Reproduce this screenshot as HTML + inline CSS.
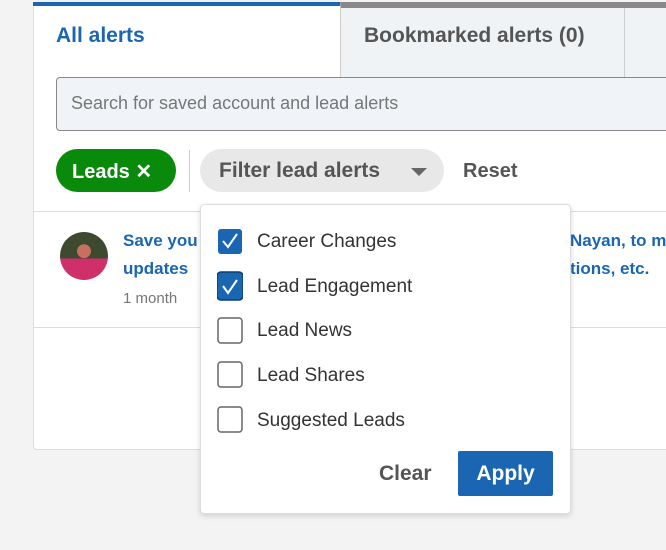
<!DOCTYPE html>
<html><head><style>
*{box-sizing:border-box;margin:0;padding:0}
body{width:666px;height:550px;background:#f3f3f3;font-family:"Liberation Sans",sans-serif;position:relative;overflow:hidden}
.a{position:absolute}
.card{left:33px;top:2px;width:700px;height:448px;background:#fff;border:1px solid #ddd;border-radius:4px}
.lbl{font-size:19px;color:#333}
</style></head><body>
<div class="a card"></div>
<div class="a" style="left:33px;top:2px;width:307px;height:4px;background:#1a66b3"></div>
<div class="a" style="left:56px;top:24px;font-size:21px;font-weight:bold;color:#1a66b3">All alerts</div>
<div class="a" style="left:340px;top:2px;width:330px;height:79px;background:#f0f3f6;border-top:6px solid #888;border-left:1px solid #ccc;border-bottom:1px solid #ccc"></div>
<div class="a" style="left:624px;top:8px;width:1px;height:72px;background:#ccc"></div>
<div class="a" style="left:364px;top:24px;font-size:21px;font-weight:bold;color:#555">Bookmarked alerts (0)</div>
<div class="a" style="left:56px;top:77px;width:620px;height:54px;background:#f0f3f7;border:1px solid #888;border-radius:4px"></div>
<div class="a" style="left:71px;top:93px;font-size:18px;color:#777">Search for saved account and lead alerts</div>
<div class="a" style="left:56px;top:149px;width:120px;height:43px;background:#0a8a0a;border-radius:22px;color:#fff;font-weight:bold;font-size:20px;padding:10px 0 0 16px">Leads ✕</div>
<div class="a" style="left:189px;top:150px;width:1px;height:42px;background:#ccc"></div>
<div class="a" style="left:200px;top:149px;width:244px;height:43px;background:#e8e8e8;border-radius:22px;color:#555;font-weight:bold;font-size:21px;padding:10px 0 0 19px">Filter lead alerts</div>
<div class="a" style="left:411px;top:168px;width:0;height:0;border-left:8px solid transparent;border-right:8px solid transparent;border-top:8px solid #666"></div>
<div class="a" style="left:463px;top:160px;font-weight:bold;font-size:20px;color:#555">Reset</div>
<div class="a" style="left:34px;top:211px;width:640px;height:1px;background:#ddd"></div>
<div class="a" style="left:60px;top:232px;width:48px;height:48px;border-radius:50%;background:radial-gradient(circle at 50% 40%,#c87060 0 18%,transparent 19%),linear-gradient(#3d4a30 0 55%,#d0306a 55%)"></div>
<div class="a" style="left:123px;top:227px;font-size:17px;font-weight:bold;color:#1a66b3;line-height:28px">Save you<br>updates</div>
<div class="a" style="left:570px;top:227px;font-size:17px;font-weight:bold;color:#1a66b3;line-height:28px;white-space:nowrap">Nayan, to m<br>tions, etc.</div>
<div class="a" style="left:123px;top:290px;font-size:15px;color:#777">1 month</div>
<div class="a" style="left:34px;top:327px;width:640px;height:1px;background:#ddd"></div>
<div class="a" style="left:200px;top:204px;width:371px;height:310px;background:#fff;border:1px solid #ddd;border-radius:4px;box-shadow:0 2px 6px rgba(0,0,0,.15)"></div>
<svg class="a" style="left:217px;top:228px" width="26" height="220">
<rect x="1" y="1" width="24" height="25" rx="3" fill="#1a66b3"/>
<path d="M6 13l5 6 9-13" stroke="#fff" stroke-width="2" fill="none"/>
<rect x="0" y="44" width="26" height="28" rx="4" fill="#1a66b3" stroke="#0d3f70" stroke-width="1.5"/>
<path d="M6 58l5 7 9-13" stroke="#fff" stroke-width="2" fill="none"/>
<rect x="1" y="90" width="24" height="25" rx="3" fill="#fff" stroke="#666" stroke-width="1.5"/>
<rect x="1" y="134" width="24" height="25" rx="3" fill="#fff" stroke="#666" stroke-width="1.5"/>
<rect x="1" y="179" width="24" height="25" rx="3" fill="#fff" stroke="#666" stroke-width="1.5"/>
</svg>
<div class="a lbl" style="left:257px;top:231px">Career Changes</div>
<div class="a lbl" style="left:257px;top:276px">Lead Engagement</div>
<div class="a lbl" style="left:257px;top:320px">Lead News</div>
<div class="a lbl" style="left:257px;top:365px">Lead Shares</div>
<div class="a lbl" style="left:257px;top:410px">Suggested Leads</div>
<div class="a" style="left:379px;top:462px;font-size:21px;font-weight:bold;color:#555">Clear</div>
<div class="a" style="left:458px;top:451px;width:95px;height:45px;background:#1a66b3;border-radius:2px;color:#fff;font-size:21px;font-weight:bold;text-align:center;padding-top:11px">Apply</div>
</body></html>
